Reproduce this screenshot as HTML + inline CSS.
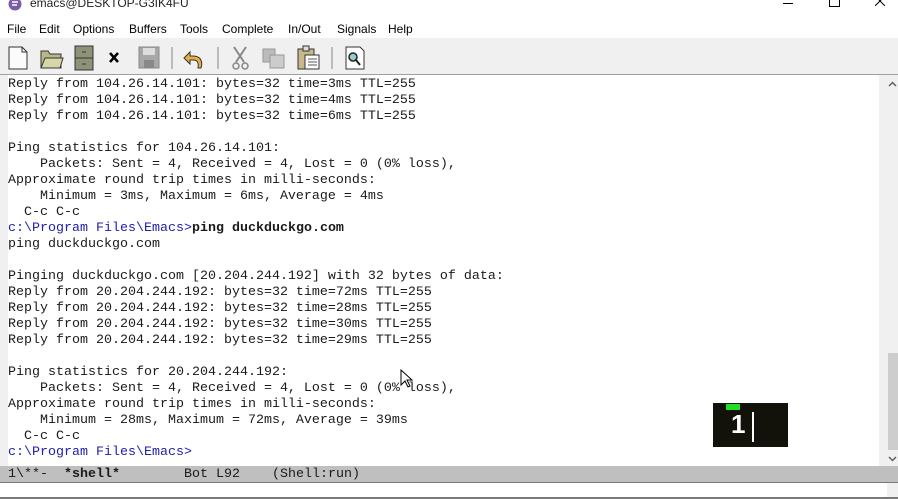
<!DOCTYPE html>
<html><head><meta charset="utf-8"><style>
body{margin:0;width:898px;height:499px;overflow:hidden;background:#fff;position:relative;font-family:"Liberation Sans",sans-serif}
.abs{position:absolute}
#title{left:0;top:0;width:898px;height:16px;background:#fff}
#menu{left:0;top:18px;height:20px;font-size:12px;color:#000}
#menu span{position:absolute;top:4px;white-space:nowrap}
#tb{left:0;top:38px;width:898px;height:36px;background:#f0f0f0;border-bottom:1px solid #a0a0a0}
#text{left:8px;top:77px;font-family:"Liberation Mono",monospace;font-size:13.33px;line-height:16px;color:#1a1a1a;white-space:pre}
.p{color:#2020b0}
b{font-weight:bold}
#lf{left:0;top:75px;width:8px;height:391px;background:#f0f0f0}
#rf{left:879px;top:75px;width:8px;height:391px;background:#f0f0f0}
#sb{left:887px;top:75px;width:11px;height:391px;background:#f0f0f0}
#ml{left:0;top:466px;width:890px;padding-left:8px;height:16px;background:#bfbfbf;border-bottom:1px solid #7a7a7a;font-family:"Liberation Mono",monospace;font-size:13.33px;line-height:17px;white-space:pre;color:#1a1a1a}
</style></head><body>
<div class="abs" id="title">
<svg class="abs" style="left:8px;top:-3px" width="14" height="14"><circle cx="7" cy="7" r="6.5" fill="#7b5ea8"/><path d="M4 5h6M4 8h5" stroke="#fff" stroke-width="1.5"/></svg>
<div class="abs" style="left:30px;top:-4px;font-size:12px;color:#222">emacs@DESKTOP-G3IK4FU</div>
<div class="abs" style="left:783px;top:3px;width:10px;height:1px;background:#000"></div>
<div class="abs" style="left:829px;top:-4px;width:9px;height:9px;border:1px solid #000"></div>
<svg class="abs" style="left:875px;top:-4px" width="11" height="10"><path d="M0 0L10 10M10 0L0 10" stroke="#000"/></svg>
</div>
<div class="abs" id="menu">
<span style="left:7px">File</span><span style="left:39px">Edit</span><span style="left:73px">Options</span><span style="left:129px">Buffers</span><span style="left:180px">Tools</span><span style="left:222px">Complete</span><span style="left:288px">In/Out</span><span style="left:337px">Signals</span><span style="left:388px">Help</span>
</div>
<div class="abs" id="tb">
<svg width="380" height="36">
<path d="M9 9h13l5 5v17H9z" fill="#fbfbfb" stroke="#333"/><path d="M22 9v5h5" fill="none" stroke="#333"/>
<path d="M41 13h7l2 3h11v14H41z" fill="#b8b88a" stroke="#333"/><path d="M41 30l4-10h18l-3 10z" fill="#d6d6a8" stroke="#333"/>
<rect x="75" y="8" width="18" height="24" fill="#8e9378" stroke="#333"/><path d="M75 20h18M82 14h4M82 26h4" stroke="#333"/>
<path d="M110 15l8 9M118 15l-8 9" stroke="#000" stroke-width="2.5"/>
<rect x="139" y="9" width="20" height="21" fill="#a8a8a8" stroke="#888"/><rect x="143" y="10" width="12" height="7" fill="#ddd"/><rect x="144" y="22" width="10" height="8" fill="#888"/>
<path d="M172 9v22" stroke="#bbb" stroke-width="2"/>
<path d="M201 30c2-6 0-12-8-12h-3v-4l-6 6 6 6v-4h3c4 0 6 2 5 8z" fill="#e8b040" stroke="#333"/>
<path d="M218 9v22" stroke="#bbb" stroke-width="2"/>
<path d="M234 9l10 15M246 9l-10 15" stroke="#888" stroke-width="2"/><circle cx="236" cy="28" r="3" fill="none" stroke="#888" stroke-width="1.5"/><circle cx="245" cy="28" r="3" fill="none" stroke="#888" stroke-width="1.5"/>
<rect x="263" y="11" width="12" height="13" fill="#bbb" stroke="#999"/><rect x="270" y="17" width="14" height="13" fill="#ccc" stroke="#999"/>
<rect x="298" y="11" width="16" height="20" fill="#c9b98a" stroke="#333"/><rect x="303" y="8" width="6" height="5" fill="#ddd" stroke="#333"/><rect x="305" y="17" width="14" height="14" fill="#fff" stroke="#333"/><path d="M308 21h9M308 24h9M308 27h9" stroke="#555"/>
<path d="M332 9v22" stroke="#bbb" stroke-width="2"/>
<path d="M346 9h14l4 4v18h-18z" fill="#fff" stroke="#333"/><circle cx="353" cy="19" r="4" fill="#9cc" stroke="#222" stroke-width="1.5"/><path d="M356 22l4 5" stroke="#222" stroke-width="2"/>
</svg>
</div>
<div class="abs" id="lf"></div><div class="abs" id="rf"></div>
<div class="abs" id="sb">
<svg class="abs" style="left:1px;top:6px" width="9" height="6"><path d="M1 5l3.5-3.5L8 5" stroke="#606060" stroke-width="1.5" fill="none"/></svg>
<div class="abs" style="left:1px;top:278px;width:10px;height:97px;background:#cdcdcd"></div>
<svg class="abs" style="left:1px;top:381px" width="9" height="6"><path d="M1 1l3.5 3.5L8 1" stroke="#606060" stroke-width="1.5" fill="none"/></svg>
</div>
<div class="abs" id="text">Reply from 104.26.14.101: bytes=32 time=3ms TTL=255
Reply from 104.26.14.101: bytes=32 time=4ms TTL=255
Reply from 104.26.14.101: bytes=32 time=6ms TTL=255

Ping statistics for 104.26.14.101:
    Packets: Sent = 4, Received = 4, Lost = 0 (0% loss),
Approximate round trip times in milli-seconds:
    Minimum = 3ms, Maximum = 6ms, Average = 4ms
  C-c C-c
<span class="p">c:\Program Files\Emacs&gt;</span><b>ping duckduckgo.com</b>
ping duckduckgo.com

Pinging duckduckgo.com [20.204.244.192] with 32 bytes of data:
Reply from 20.204.244.192: bytes=32 time=72ms TTL=255
Reply from 20.204.244.192: bytes=32 time=28ms TTL=255
Reply from 20.204.244.192: bytes=32 time=30ms TTL=255
Reply from 20.204.244.192: bytes=32 time=29ms TTL=255

Ping statistics for 20.204.244.192:
    Packets: Sent = 4, Received = 4, Lost = 0 (0% loss),
Approximate round trip times in milli-seconds:
    Minimum = 28ms, Maximum = 72ms, Average = 39ms
  C-c C-c
<span class="p">c:\Program Files\Emacs&gt;</span></div>
<svg class="abs" style="left:400px;top:369px" width="14" height="20"><path d="M1 1v15l4-4 3 6 2-1-3-6h5z" fill="#fff" stroke="#000"/></svg>
<div class="abs" style="left:713px;top:403px;width:75px;height:44px;background:#12120a">
<div class="abs" style="left:13px;top:1px;width:14px;height:6px;background:#22dd22"></div>
<div class="abs" style="left:18px;top:6px;color:#fff;font-size:26px;font-weight:bold;font-family:'Liberation Sans',sans-serif">1</div>
<div class="abs" style="left:39px;top:9px;width:2px;height:30px;background:#fff"></div>
</div>
<div class="abs" id="ml">1\**-  <b>*shell*</b>        Bot L92    (Shell:run)</div>
<div class="abs" style="left:887px;top:483px;width:11px;height:14px;background:#f0f0f0"></div>
<div class="abs" style="left:0;top:497px;width:898px;height:2px;background:#7a7a7a"></div>
</body></html>
